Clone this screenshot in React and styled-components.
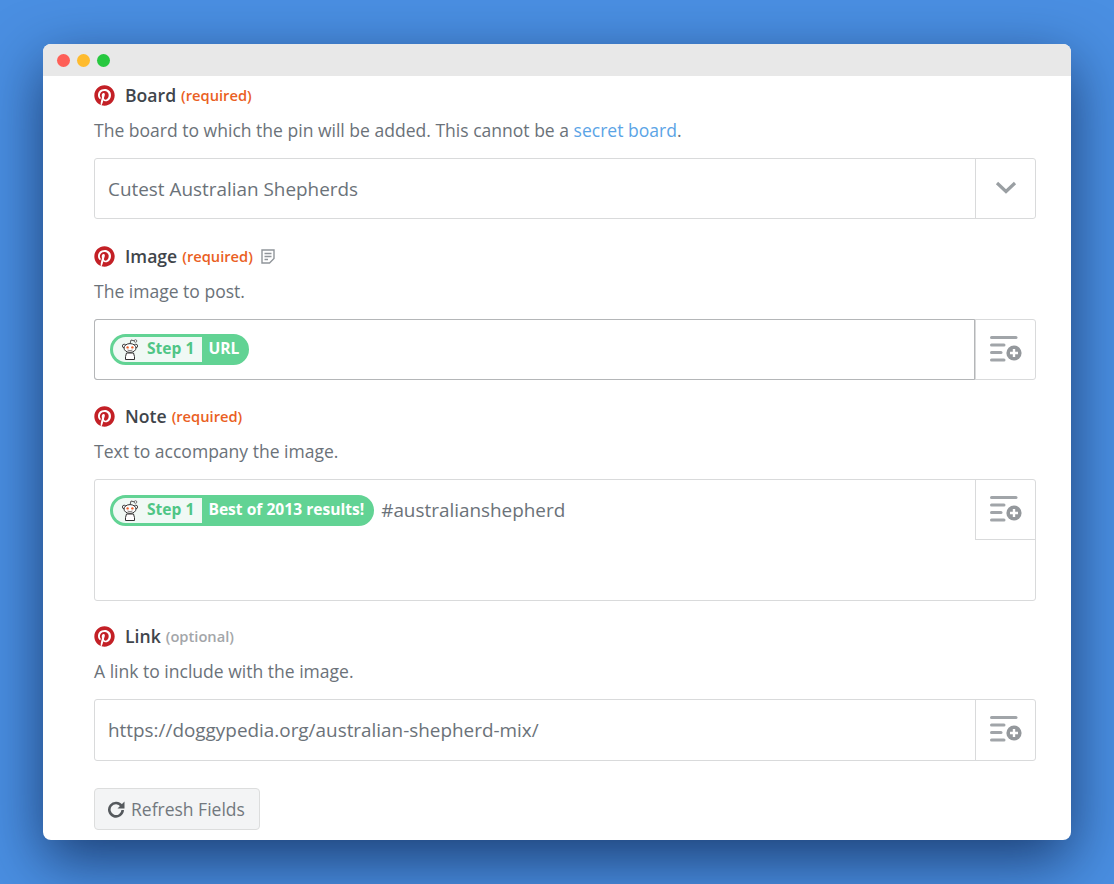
import React from "react"
import styled, { createGlobalStyle } from "styled-components"
import { FaPinterest } from "react-icons/fa"

const Global = createGlobalStyle`
  html, body {
    margin: 0;
    height: 884px;
    overflow: hidden;
    background: #4a8fe2;
    font-family: "Open Sans", "Liberation Sans", sans-serif;
  }
`

const Snoo = () => (
  <svg width="18" height="23" viewBox="0 0 18 23">
    <path d="M9 6 L10 2 L14 3" fill="none" stroke="#555" strokeWidth="1" />
    <circle cx="14.5" cy="3" r="1.3" fill="#fff" stroke="#555" strokeWidth="0.8" />
    <circle cx="3.2" cy="8" r="1.8" fill="#fff" stroke="#444" strokeWidth="1" />
    <circle cx="14.8" cy="8" r="1.8" fill="#fff" stroke="#444" strokeWidth="1" />
    <path d="M5.5 15 Q4 19 4.5 21.5 H13.5 Q14 19 12.5 15 Z" fill="#fff" stroke="#333" strokeWidth="1" />
    <ellipse cx="9" cy="10" rx="6" ry="4.4" fill="#fff" stroke="#333" strokeWidth="1" />
    <circle cx="6.6" cy="9.4" r="1.2" fill="#f0602a" />
    <circle cx="11.4" cy="9.4" r="1.2" fill="#f0602a" />
    <path d="M6.5 12 Q9 13.5 11.5 12" fill="none" stroke="#444" strokeWidth="0.7" />
  </svg>
)

const Chevron = () => (
  <svg width="22" height="13" viewBox="0 0 22 13">
    <path d="M2 2 L11 10.5 L20 2" fill="none" stroke="#9a9fa3" strokeWidth="3.2" />
  </svg>
)

const InsertIcon = () => (
  <svg width="32" height="26" viewBox="0 0 32 26">
    <g stroke="#a1a5a9" strokeWidth="3" strokeLinecap="round">
      <path d="M1.5 1.5 H26" />
      <path d="M1.5 9 H14" />
      <path d="M1.5 16.5 H11" />
      <path d="M1.5 24 H14" />
    </g>
    <circle cx="24" cy="17" r="7.6" fill="#94989c" />
    <path d="M24 13 V21 M20 17 H28" stroke="#fff" strokeWidth="2.4" />
  </svg>
)

const NoteIcon = () => (
  <svg width="14" height="15" viewBox="0 0 14 15">
    <path d="M1 1 H13 V9.5 L8.5 14 H1 Z" fill="none" stroke="#90959a" strokeWidth="1.4" />
    <path d="M3.5 4.5 H10.5 M3.5 7.5 H10.5 M3.5 10.5 H7" stroke="#90959a" strokeWidth="1.3" />
  </svg>
)

const RefreshIcon = () => (
  <svg width="18" height="18" viewBox="0 0 18 18">
    <path d="M14.6 6 A6.7 6.7 0 1 0 15.7 10" fill="none" stroke="#55595d" strokeWidth="2.6" />
    <path d="M17.5 1.5 V8.5 H10.5 Z" fill="#55595d" />
  </svg>
)

const Label = ({ name, hint, optional, note }) => (
  <LabelRow>
    <FaPinterest size={21} color="#c32026" />
    <LabelName>{name}</LabelName>
    <LabelHint $optional={optional}>{hint}</LabelHint>
    {note && <NoteSlot><NoteIcon /></NoteSlot>}
  </LabelRow>
)

const Pill = ({ children }) => (
  <PillBox>
    <PillStep>
      <Snoo />
      <span>Step 1</span>
    </PillStep>
    <PillValue>{children}</PillValue>
  </PillBox>
)

const App = () => {
  return (
    <>
      <Global />
      <Page>
        <Window>
          <TitleBar>
            <Dot $color="#fe5f57" />
            <Dot $color="#febb2e" />
            <Dot $color="#27c83f" />
          </TitleBar>
          <Content>
            <Field $gap={26}>
              <Label name="Board" hint="(required)" />
              <Description>
                The board to which the pin will be added. This cannot be a <a>secret board</a>.
              </Description>
              <InputBox>
                <InputMain>Cutest Australian Shepherds</InputMain>
                <SideCell><Chevron /></SideCell>
              </InputBox>
            </Field>

            <Field $gap={25}>
              <Label name="Image" hint="(required)" note />
              <Description>The image to post.</Description>
              <InputBox>
                <InputMain $focus>
                  <Pill>URL</Pill>
                </InputMain>
                <SideCell><InsertIcon /></SideCell>
              </InputBox>
            </Field>

            <Field $gap={24}>
              <Label name="Note" hint="(required)" />
              <Description>Text to accompany the image.</Description>
              <TextareaBox>
                <Pill>Best of 2013 results!</Pill>
                <span>#australianshepherd</span>
                <CornerCell><InsertIcon /></CornerCell>
              </TextareaBox>
            </Field>

            <Field $gap={27}>
              <Label name="Link" hint="(optional)" optional />
              <Description>A link to include with the image.</Description>
              <InputBox $tall>
                <InputMain>https://doggypedia.org/australian-shepherd-mix/</InputMain>
                <SideCell><InsertIcon /></SideCell>
              </InputBox>
            </Field>

            <RefreshButton>
              <RefreshIcon />
              Refresh Fields
            </RefreshButton>
          </Content>
        </Window>
      </Page>
    </>
  )
}

export default App

const Page = styled.div`
  width: 1114px;
  height: 884px;
  padding: 44px 43px;
  box-sizing: border-box;
`

const Window = styled.div`
  width: 1028px;
  height: 796px;
  background: #fff;
  border-radius: 8px;
  overflow: hidden;
  box-shadow: 0 20px 60px rgba(10, 30, 70, 0.72);
`

const TitleBar = styled.div`
  height: 32px;
  background: #e8e8e8;
  display: flex;
  align-items: center;
  gap: 7px;
  padding-left: 14px;
`

const Dot = styled.span`
  width: 13px;
  height: 13px;
  border-radius: 50%;
  background: ${(p) => p.$color};
`

const Content = styled.div`
  padding: 8px 35px 0 51px;
`

const Field = styled.div`
  margin-bottom: ${(p) => p.$gap}px;
`

const LabelRow = styled.div`
  height: 22px;
  display: flex;
  align-items: center;
`

const LabelName = styled.span`
  margin-left: 10px;
  font-size: 17.6px;
  font-weight: 600;
  color: #3f454b;
`

const LabelHint = styled.span`
  margin-left: 5px;
  font-size: 14.7px;
  font-weight: 600;
  color: ${(p) => (p.$optional ? "#a3a6a9" : "#ea5f24")};
`

const NoteSlot = styled.span`
  display: flex;
  margin-left: 8px;
`

const Description = styled.div`
  margin: 12px 0 16px;
  height: 24px;
  line-height: 24px;
  font-size: 17.55px;
  color: #6b7279;

  a {
    color: #5ba4e6;
  }
`

const InputBox = styled.div`
  display: flex;
  height: ${(p) => (p.$tall ? 62 : 61)}px;
  box-sizing: border-box;
  border: 1px solid #d9dadb;
  border-radius: 3px;
  font-size: 18.9px;
  color: #6b7279;
`

const InputMain = styled.div`
  flex: 1;
  display: flex;
  align-items: center;
  margin: ${(p) => (p.$focus ? "-1px 0 -1px -1px" : 0)};
  padding-left: ${(p) => (p.$focus ? 15 : 13)}px;
  border: ${(p) => (p.$focus ? "1px solid #b4b6b8" : "none")};
  border-radius: 3px 0 0 3px;
`

const SideCell = styled.div`
  width: 60px;
  flex: none;
  box-sizing: border-box;
  display: flex;
  align-items: center;
  justify-content: center;
  padding-bottom: 2px;
  border-left: 1px solid #d9dadb;
`

const TextareaBox = styled.div`
  position: relative;
  height: 122px;
  box-sizing: border-box;
  border: 1px solid #d9dadb;
  border-radius: 3px;
  padding: 15px 0 0 15px;
  display: flex;
  align-items: flex-start;
  gap: 7px;
  font-size: 18.9px;
  line-height: 30px;
  color: #6b7279;
`

const CornerCell = styled.div`
  position: absolute;
  top: 0;
  right: 0;
  width: 60px;
  height: 60px;
  box-sizing: border-box;
  display: flex;
  align-items: center;
  justify-content: center;
  padding-bottom: 2px;
  border-left: 1px solid #d9dadb;
  border-bottom: 1px solid #d9dadb;
`

const PillBox = styled.div`
  display: inline-flex;
  height: 31px;
  box-sizing: border-box;
  background: #62d394;
  border: 3px solid #62d394;
  border-radius: 16px;
  overflow: hidden;
  font-size: 15.6px;
  line-height: 23px;
  font-weight: 700;
`

const PillStep = styled.span`
  display: flex;
  align-items: center;
  gap: 8px;
  padding: 0 8px 0 8px;
  background: #f0f9f5;
  color: #4fc585;

  span {
    margin-bottom: 2px;
  }
`

const PillValue = styled.span`
  padding: 0 7px 0 6px;
  color: #fff;
`

const RefreshButton = styled.button`
  display: flex;
  align-items: center;
  gap: 6px;
  width: 166px;
  height: 42px;
  padding: 0 0 0 12px;
  background: #f3f4f5;
  border: 1px solid #dcdddd;
  border-radius: 4px;
  font-family: inherit;
  font-size: 17.5px;
  color: #72787e;
`
